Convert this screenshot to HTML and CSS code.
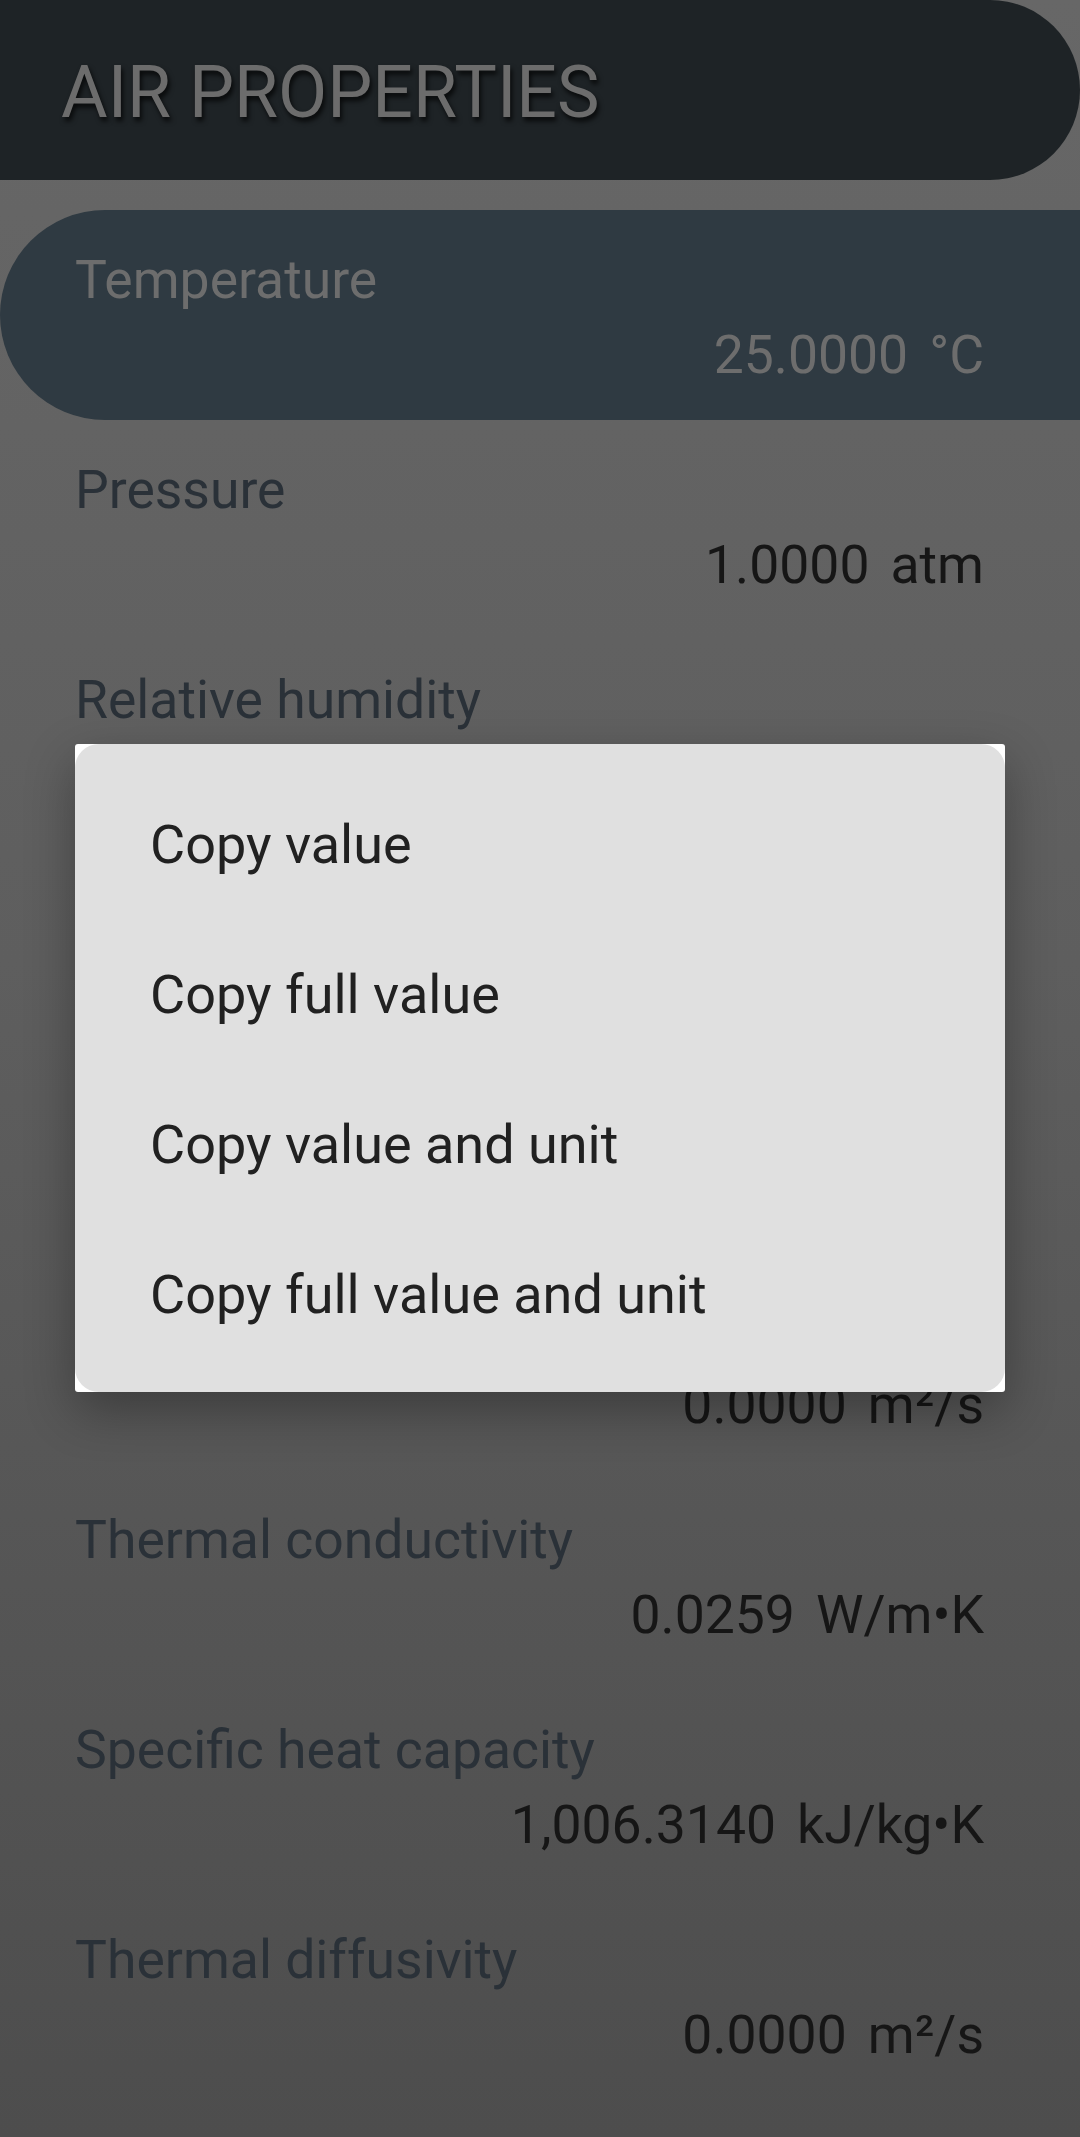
FILE: index.html
```html
<!DOCTYPE html>
<html lang="en">
<head>
<meta charset="utf-8">
<title>Air Properties</title>
<link rel="stylesheet" href="styles.css">
</head>
<body>
<div class="app">
  <header class="appbar"><h1 class="title">AIR PROPERTIES</h1></header>
  <main class="list">
    <div class="row selected">
      <div class="label">Temperature</div>
      <div class="value"><span class="num">25.0000</span><span class="unit">°C</span></div>
    </div>
    <div class="row">
      <div class="label">Pressure</div>
      <div class="value"><span class="num">1.0000</span><span class="unit">atm</span></div>
    </div>
    <div class="row">
      <div class="label">Relative humidity</div>
      <div class="value"><span class="num">50.0000</span><span class="unit">%</span></div>
    </div>
    <div class="row">
      <div class="label">Density</div>
      <div class="value"><span class="num">1.1839</span><span class="unit">kg/m³</span></div>
    </div>
    <div class="row">
      <div class="label">Dynamic viscosity</div>
      <div class="value"><span class="num">0.0000</span><span class="unit">Pa•s</span></div>
    </div>
    <div class="row">
      <div class="label">Kinematic viscosity</div>
      <div class="value"><span class="num">0.0000</span><span class="unit">m²/s</span></div>
    </div>
    <div class="row">
      <div class="label">Thermal conductivity</div>
      <div class="value"><span class="num">0.0259</span><span class="unit">W/m•K</span></div>
    </div>
    <div class="row">
      <div class="label">Specific heat capacity</div>
      <div class="value"><span class="num">1,006.3140</span><span class="unit">kJ/kg•K</span></div>
    </div>
    <div class="row">
      <div class="label">Thermal diffusivity</div>
      <div class="value"><span class="num">0.0000</span><span class="unit">m²/s</span></div>
    </div>
  </main>
</div>
<div class="menu-frame">
  <ul class="menu">
    <li class="menu-item">Copy value</li>
    <li class="menu-item">Copy full value</li>
    <li class="menu-item">Copy value and unit</li>
    <li class="menu-item">Copy full value and unit</li>
  </ul>
</div>
</body>
</html>
```

FILE: styles.css
```css
html, body {
  margin: 0;
  padding: 0;
}
body {
  width: 1080px;
  min-height: 2137px;
  background: linear-gradient(to bottom, #676767 0%, #5e5e5e 45%, #4d4d4d 100%);
  font-family: Roboto, "Noto Sans", "Liberation Sans", sans-serif;
  position: relative;
  overflow: hidden;
}
.app {
  display: flex;
  flex-direction: column;
}
.appbar {
  height: 180px;
  box-sizing: border-box;
  background: #1e2326;
  border-radius: 0 90px 90px 0;
  padding: 51px 0 0 61px;
}
.title {
  margin: 0;
  font-size: 71.5px;
  font-weight: 400;
  line-height: 84px;
  color: #6c6c6c;
  text-shadow: 2px 4px 5px rgba(0, 0, 0, 0.75);
}
.list {
  margin-top: 30px;
  display: flex;
  flex-direction: column;
}
.row {
  height: 210px;
  box-sizing: border-box;
  padding: 32px 96px 0 75px;
  display: flex;
  flex-direction: column;
}
.row.selected {
  background: #2f3a42;
  border-radius: 105px 0 0 105px;
}
.label {
  font-size: 53.5px;
  line-height: 75px;
  color: #2a3138;
}
.value {
  font-size: 53.5px;
  line-height: 75px;
  color: #161616;
  text-align: right;
}
.unit {
  margin-left: 21px;
}
.row.selected .label {
  color: #6d6d6d;
}
.row.selected .value {
  color: #6d6d6d;
}
.menu-frame {
  position: absolute;
  left: 75px;
  top: 744px;
  width: 930px;
  height: 648px;
  background: #ffffff;
  border-radius: 3px;
  box-shadow: 0 18px 50px rgba(0, 0, 0, 0.32);
}
.menu {
  list-style: none;
  margin: 0;
  height: 100%;
  box-sizing: border-box;
  padding: 26px 0 22px 0;
  background: #e0e0e0;
  border-radius: 24px;
}
.menu-item {
  height: 150px;
  line-height: 150px;
  padding-left: 75px;
  font-size: 54px;
  color: #212121;
}
```
